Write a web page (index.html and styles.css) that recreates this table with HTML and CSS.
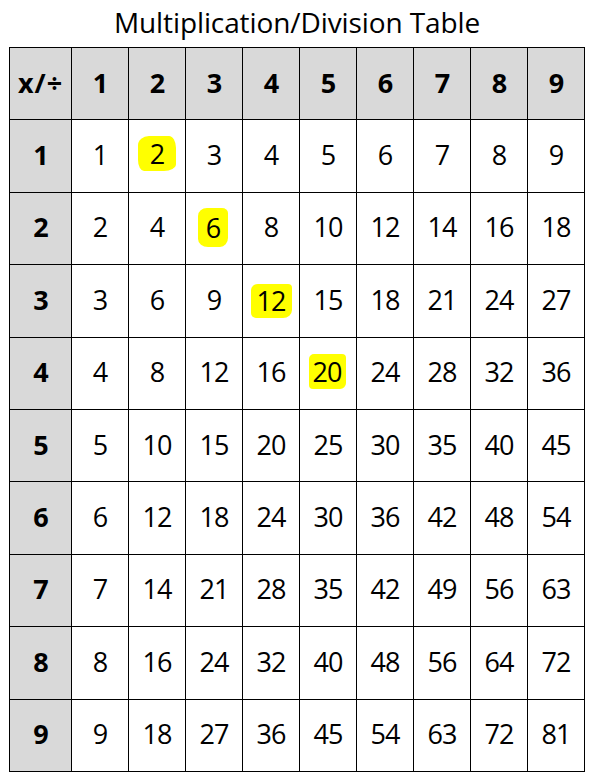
FILE: index.html
```html
<!DOCTYPE html>
<html>
<head>
<meta charset="utf-8">
<link rel="stylesheet" href="styles.css">
</head>
<body>
<div class="page">
  <h1 class="title">Multiplication/Division Table</h1>
  <table class="grid">
    <thead>
      <tr>
        <th class="corner">x/÷</th>
        <th>1</th><th>2</th><th>3</th><th>4</th><th>5</th><th>6</th><th>7</th><th>8</th><th>9</th>
      </tr>
    </thead>
    <tbody>
      <tr><th>1</th><td>1</td><td><span class="hl hl-a">2</span></td><td>3</td><td>4</td><td>5</td><td>6</td><td>7</td><td>8</td><td>9</td></tr>
      <tr><th>2</th><td>2</td><td>4</td><td><span class="hl hl-b">6</span></td><td>8</td><td>10</td><td>12</td><td>14</td><td>16</td><td>18</td></tr>
      <tr><th>3</th><td>3</td><td>6</td><td>9</td><td><span class="hl hl-c">12</span></td><td>15</td><td>18</td><td>21</td><td>24</td><td>27</td></tr>
      <tr><th>4</th><td>4</td><td>8</td><td>12</td><td>16</td><td><span class="hl hl-d">20</span></td><td>24</td><td>28</td><td>32</td><td>36</td></tr>
      <tr><th>5</th><td>5</td><td>10</td><td>15</td><td>20</td><td>25</td><td>30</td><td>35</td><td>40</td><td>45</td></tr>
      <tr><th>6</th><td>6</td><td>12</td><td>18</td><td>24</td><td>30</td><td>36</td><td>42</td><td>48</td><td>54</td></tr>
      <tr><th>7</th><td>7</td><td>14</td><td>21</td><td>28</td><td>35</td><td>42</td><td>49</td><td>56</td><td>63</td></tr>
      <tr><th>8</th><td>8</td><td>16</td><td>24</td><td>32</td><td>40</td><td>48</td><td>56</td><td>64</td><td>72</td></tr>
      <tr><th>9</th><td>9</td><td>18</td><td>27</td><td>36</td><td>45</td><td>54</td><td>63</td><td>72</td><td>81</td></tr>
    </tbody>
  </table>
</div>
</body>
</html>
```
FILE: styles.css
```css
html, body {
  margin: 0;
  padding: 0;
  background: #ffffff;
}
.page {
  width: 591px;
  padding: 0 0 0 9px;
  box-sizing: border-box;
  font-family: "Open Sans", "Noto Sans", sans-serif;
  color: #000;
}
.title {
  margin: 0;
  height: 47px;
  width: 576px;
  text-align: center;
  font-weight: 400;
  font-size: 28px;
  line-height: 44px;
  letter-spacing: -0.1px;
}
.grid {
  border-collapse: collapse;
  table-layout: fixed;
}
.grid th, .grid td {
  border: 1px solid #000;
  height: 68.4px;
  padding: 0 0 3px;
  text-align: center;
  vertical-align: middle;
  font-size: 27px;
  letter-spacing: -1px;
}
.grid thead th {
  width: 56px;
}
.grid thead th.corner {
  width: 61px;
  letter-spacing: 1px;
  font-size: 27px;
}
.grid th {
  background: #d9d9d9;
  font-weight: 700;
}
.grid td {
  font-weight: 400;
}
.hl {
  display: inline-flex;
  align-items: center;
  justify-content: center;
  background: #ffff00;
  margin: -10px -12px;
  vertical-align: middle;
  position: relative;
}
.hl-a {
  width: 38px;
  height: 35px;
  top: -4px;
  border-radius: 11px 7px 12px 6px / 9px 12px 7px 11px;
}
.hl-b {
  width: 30px;
  height: 39px;
  left: -1px;
  top: -3px;
  border-radius: 9px 6px 8px 10px / 8px 5px 9px 8px;
}
.hl-c {
  width: 41px;
  height: 34px;
  top: -2px;
  border-radius: 7px 4px 9px 5px / 6px 4px 8px 5px;
}
.hl-d {
  width: 37px;
  height: 35px;
  left: -1px;
  top: -4px;
  border-radius: 5px 4px 6px 4px;
}
```
